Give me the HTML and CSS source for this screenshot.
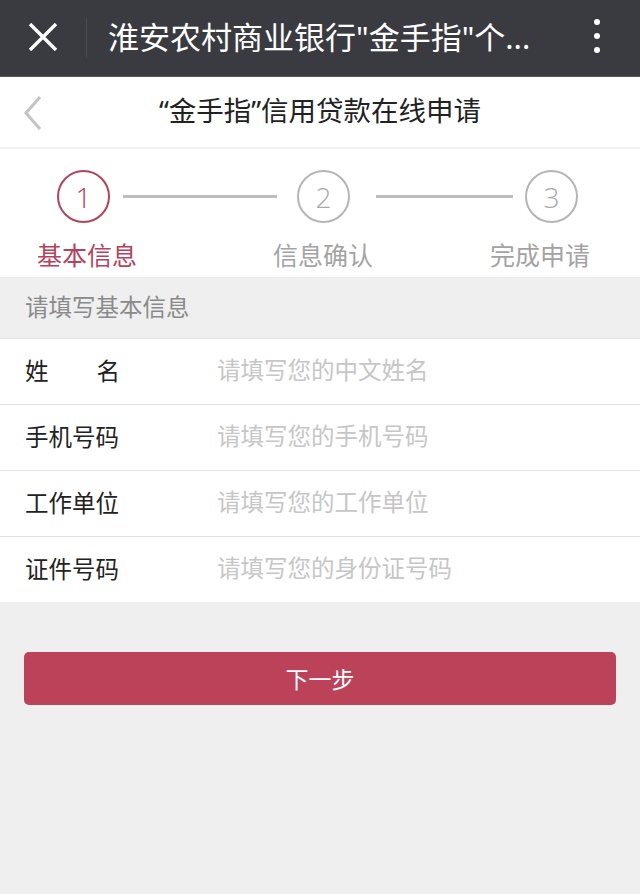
FILE: index.html
```html
<!DOCTYPE html>
<html>

<head>
    <title>
        “金手指”信用贷款在线申请
    </title>
    <link rel="stylesheet" href="styles.css">
</head>

<body>
    <header class="topbar">
        <div class="close">
            <svg width="30" height="28" viewBox="0 0 30 28">
                <path d="M2 1 L28 27 M28 1 L2 27" stroke="#fff" stroke-width="3.4" fill="none" />
            </svg>
        </div>
        <div class="topbar-sep"></div>
        <div class="topbar-title">淮安农村商业银行"金手指"个...</div>
        <div class="more">
            <span></span><span></span><span></span>
        </div>
    </header>

    <nav class="navbar">
        <div class="back">
            <svg width="22" height="36" viewBox="0 0 22 36">
                <path d="M18 2 L4 18 L18 34" stroke="#c4c4c4" stroke-width="3" fill="none" />
            </svg>
        </div>
        <h1 class="nav-title">“金手指”信用贷款在线申请</h1>
    </nav>

    <section class="steps">
        <div class="step-track">
            <div class="circle active">1</div>
            <div class="line first"></div>
            <div class="circle">2</div>
            <div class="line second"></div>
            <div class="circle">3</div>
        </div>
        <div class="step-labels">
            <span class="active">基本信息</span>
            <span>信息确认</span>
            <span>完成申请</span>
        </div>
    </section>

    <div class="section-head">请填写基本信息</div>

    <form class="form">
        <div class="row">
            <label class="spaced"><span>姓</span><span>名</span></label>
            <input type="text" placeholder="请填写您的中文姓名">
        </div>
        <div class="row">
            <label>手机号码</label>
            <input type="text" placeholder="请填写您的手机号码">
        </div>
        <div class="row">
            <label>工作单位</label>
            <input type="text" placeholder="请填写您的工作单位">
        </div>
        <div class="row">
            <label>证件号码</label>
            <input type="text" placeholder="请填写您的身份证号码">
        </div>
    </form>

    <div class="actions">
        <button type="button" class="next">下一步</button>
    </div>
</body>

</html>
```

FILE: styles.css
```css
body {
    margin: 0;
    font-family: "Noto Sans", "Noto Sans CJK SC", sans-serif;
    background-color: #efefef;
    color: #222;
}

.topbar {
    height: 76px;
    background-color: #3a3b40;
    display: flex;
    align-items: center;
    color: #fff;
    border-bottom: 1px solid #55565a;
}

.close {
    width: 85px;
    display: flex;
    justify-content: center;
    padding-right: 1px;
    padding-bottom: 3px;
}

.close svg {
    display: block;
}

.topbar-sep {
    width: 1px;
    height: 40px;
    margin-bottom: 1px;
    background-color: #4a4b50;
}

.topbar-title {
    flex: 1;
    padding-left: 21px;
    padding-bottom: 5px;
    font-size: 31px;
    white-space: nowrap;
    overflow: hidden;
}

.more {
    width: 86px;
    display: flex;
    flex-direction: column;
    align-items: center;
    gap: 8px;
    padding-bottom: 5px;
}

.more span {
    width: 6px;
    height: 6px;
    border-radius: 50%;
    background-color: #fff;
}

.navbar {
    height: 70px;
    background-color: #fff;
    display: flex;
    align-items: center;
    justify-content: center;
    position: relative;
    border-bottom: 2px solid #f2f2f2;
}

.back {
    position: absolute;
    left: 22px;
    top: 18px;
}

.nav-title {
    margin: 0 0 6px;
    font-size: 27.5px;
    font-weight: normal;
    color: #222;
}

.steps {
    background-color: #fff;
    height: 128px;
    box-sizing: border-box;
    padding-top: 21px;
}

.step-track {
    display: flex;
    align-items: center;
    padding-left: 57px;
}

.circle {
    width: 49px;
    height: 49px;
    border: 2px solid #b5b5b5;
    border-radius: 50%;
    display: flex;
    align-items: center;
    justify-content: center;
    font-size: 28px;
    font-family: "Open Sans", sans-serif;
    font-weight: 300;
    color: #a9a9a9;
    flex-shrink: 0;
}

.circle.active {
    border-color: #b5425c;
    color: #b5425c;
}

.line {
    height: 3px;
    background-color: #bdbdbd;
}

.line.first {
    width: 154px;
    margin: 0 20px 0 13px;
}

.line.second {
    width: 137px;
    margin: 0 12px 0 26px;
}

.step-labels {
    display: flex;
    padding-left: 37px;
    margin-top: 13px;
    font-size: 25px;
    color: #a3a3a3;
}

.step-labels span {
    width: 100px;
}

.step-labels span:nth-child(2) {
    margin-left: 136px;
}

.step-labels span:nth-child(3) {
    margin-left: 117px;
}

.step-labels .active {
    color: #b5425c;
}

.section-head {
    height: 61px;
    line-height: 60px;
    padding-left: 25px;
    font-size: 23.5px;
    color: #8a8a8a;
}

.form {
    background-color: #fff;
}

.row {
    height: 66px;
    box-sizing: border-box;
    display: flex;
    align-items: center;
    border-top: 1px solid #e2e2e2;
    padding: 0 0 3px 25px;
}

.row label {
    width: 192px;
    font-size: 23.5px;
    color: #222;
    display: flex;
}

.row label.spaced span:first-child {
    margin-right: 48px;
}

.row input {
    flex: 1;
    border: none;
    outline: none;
    padding: 0;
    font-family: inherit;
    font-size: 23.5px;
    color: #222;
    background: transparent;
}

.row input::placeholder {
    color: #c6c6c6;
}

.actions {
    padding: 50px 24px 0;
}

.next {
    width: 100%;
    height: 53px;
    border: none;
    border-radius: 5px;
    background-color: #bc425a;
    color: #fff;
    font-family: inherit;
    font-size: 23px;
    padding-bottom: 3px;
    cursor: pointer;
}
```
